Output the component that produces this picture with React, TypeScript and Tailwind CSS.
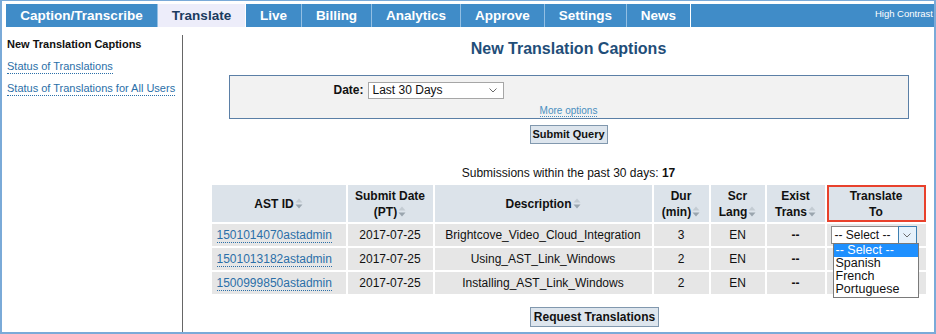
import React from 'react';

const tabs = [
  { label: 'Caption/Transcribe', w: 'w-[152px]' },
  { label: 'Translate', w: 'w-[88px]', active: true },
  { label: 'Live', w: 'w-[56px]' },
  { label: 'Billing', w: 'w-[70px]' },
  { label: 'Analytics', w: 'w-[89px]' },
  { label: 'Approve', w: 'w-[84px]' },
  { label: 'Settings', w: 'w-[82px]' },
  { label: 'News', w: 'w-[64px]', last: true },
];

const rows = [
  { id: '1501014070astadmin', date: '2017-07-25', desc: 'Brightcove_Video_Cloud_Integration', dur: '3' },
  { id: '1501013182astadmin', date: '2017-07-25', desc: 'Using_AST_Link_Windows', dur: '2' },
  { id: '1500999850astadmin', date: '2017-07-25', desc: 'Installing_AST_Link_Windows', dur: '2' },
];

function Sort() {
  return (
    <svg width="8" height="13" viewBox="0 0 8 13" className="inline-block align-middle ml-[1px] -mt-[2px]">
      <path d="M0.5 5.5L4 1.5L7.5 5.5Z" fill="#c3cbd2" />
      <path d="M0.5 7.5L7.5 7.5L4 11.5Z" fill="#9aa5ae" />
    </svg>
  );
}

function Chevron() {
  return (
    <svg width="8" height="5" viewBox="0 0 8 5">
      <path d="M0.5 0.5L4 4L7.5 0.5" fill="none" stroke="#6b6b6b" strokeWidth="1" />
    </svg>
  );
}

function OpenSelect() {
  return (
    <div className="relative ml-[4px] w-[86px] h-[18px]">
      <div className="w-full h-full border border-[#8c8c8c] bg-white flex items-stretch text-[12px]">
        <span className="flex-1 pl-[3px] leading-[16px] text-[#111]">-- Select --</span>
        <span className="w-[19px] border border-[#3c7fb1] bg-[#e5f1fb] flex items-center justify-center -m-[1px]">
          <Chevron />
        </span>
      </div>
      <div className="absolute left-[2px] top-[17px] w-[86px] border border-[#7a7a7a] bg-white text-[12.5px] leading-[13px] z-10 text-left">
        <div className="bg-[#1e90ff] text-white pl-[2px]">-- Select --</div>
        <div className="pl-[2px] text-[#111]">Spanish</div>
        <div className="pl-[2px] text-[#111]">French</div>
        <div className="pl-[2px] pb-[1px] text-[#111]">Portuguese</div>
      </div>
    </div>
  );
}

export default function App() {
  return (
    <div className="w-[936px] h-[334px] border-x-2 border-b-2 border-t border-[#7aaad8] bg-white flex flex-col overflow-hidden font-['Liberation_Sans',Arial,sans-serif] text-[#111]">
      {/* Top navigation */}
      <nav className="ml-[4px] mt-[3px] h-[23px] shrink-0 flex bg-[#408cc8]">
        {tabs.map((t) => (
          <div
            key={t.label}
            className={`${t.w} h-full flex items-center justify-center pt-[1px] text-[13.5px] font-bold border-r ${
              t.active ? 'bg-[#ededfa] text-[#1b3b5f] border-[#ffffff]' : 'text-white'
            } ${t.last ? 'border-white' : t.active ? '' : 'border-[#93bfe3]'}`}
          >
            {t.label}
          </div>
        ))}
        <div className="flex-1 flex justify-end items-center pb-[2px] pr-[1px] text-white text-[9.5px]">
          High Contrast
        </div>
      </nav>

      <div className="flex flex-1 mt-[8px]">
        {/* Sidebar */}
        <aside className="w-[181px] shrink-0 border-r border-[#666] pl-[5px] pt-[3px] flex flex-col items-start">
          <div className="text-[11px] leading-[13px] font-bold">New Translation Captions</div>
          <a className="mt-[9px] text-[11px] leading-[13px] text-[#2b6fa8] border-b border-dotted border-[#2b6fa8]">
            Status of Translations
          </a>
          <a className="mt-[8px] text-[11px] leading-[13px] text-[#2b6fa8] border-b border-dotted border-[#2b6fa8]">
            Status of Translations for All Users
          </a>
        </aside>

        {/* Main */}
        <main className="flex-1 pl-[20px] pt-[4px] flex flex-col items-center">
          <h1 className="text-[16px] leading-[19px] font-bold text-[#1f4e79]">New Translation Captions</h1>

          <div className="mt-[17px] w-[680px] h-[44px] border border-[#5b7fa6] bg-[#f2f2f2] pt-[5px] flex flex-col">
            <div className="flex items-center pl-[104px]">
              <span className="text-[12px] font-bold">Date:</span>
              <div className="ml-[4px] w-[136px] h-[17px] border border-[#a6a6a6] bg-white flex items-center justify-between pl-[4px] pr-[6px] text-[12px]">
                <span>Last 30 Days</span>
                <Chevron />
              </div>
            </div>
            <div className="mt-[4px] text-center leading-[12px]">
              <span className="text-[10px] leading-[12px] text-[#4a8fc0] border-b border-dotted border-[#4a8fc0]">
                More options
              </span>
            </div>
          </div>

          <button className="mt-[6px] w-[78px] h-[19px] bg-[#dde5ed] border border-[#8198ae] text-[11px] font-bold text-[#111] leading-none">
            Submit Query
          </button>

          <p className="mt-[22px] text-[12px] leading-[14px]">
            Submissions within the past 30 days: <b>17</b>
          </p>

          <table className="mt-[3px] table-fixed border-separate border-spacing-[2px] text-[12px]">
            <thead>
              <tr className="h-[37px] leading-[16px]">
                <th className="w-[134px] bg-[#dce3ea] font-bold text-center">
                  AST ID
                  <Sort />
                </th>
                <th className="w-[85px] bg-[#dce3ea] font-bold text-center">
                  Submit Date
                  <br />
                  (PT)
                  <Sort />
                </th>
                <th className="w-[217px] bg-[#dce3ea] font-bold text-center">
                  Description
                  <Sort />
                </th>
                <th className="w-[55px] bg-[#dce3ea] font-bold text-center">
                  Dur
                  <br />
                  (min)
                  <Sort />
                </th>
                <th className="w-[54px] bg-[#dce3ea] font-bold text-center">
                  Scr
                  <br />
                  Lang
                  <Sort />
                </th>
                <th className="w-[58px] bg-[#dce3ea] font-bold text-center">
                  Exist
                  <br />
                  Trans
                  <Sort />
                </th>
                <th className="w-[99px] bg-[#dce3ea] font-bold text-center border-2 border-[#e8412c] leading-[16px]">
                  Translate
                  <br />
                  To
                </th>
              </tr>
            </thead>
            <tbody>
              {rows.map((r, i) => (
                <tr key={r.id} className="h-[22px] leading-[14px]">
                  <td className="bg-[#e6e6e6] pl-[5px] text-left">
                    <span className="text-[#2b6fa8] border-b border-dotted border-[#2b6fa8]">{r.id}</span>
                  </td>
                  <td className="bg-[#e6e6e6] text-center">{r.date}</td>
                  <td className="bg-[#e6e6e6] text-center">{r.desc}</td>
                  <td className="bg-[#e6e6e6] text-center">{r.dur}</td>
                  <td className="bg-[#e6e6e6] text-center">EN</td>
                  <td className="bg-[#e6e6e6] text-center font-bold">--</td>
                  <td className="bg-[#e6e6e6] p-0">{i === 0 && <OpenSelect />}</td>
                </tr>
              ))}
            </tbody>
          </table>

          <button className="self-start ml-[327px] mt-[11px] w-[129px] h-[20px] bg-[#dde5ed] border border-[#8198ae] text-[12px] font-bold text-[#111] leading-none">
            Request Translations
          </button>
        </main>
      </div>
    </div>
  );
}
